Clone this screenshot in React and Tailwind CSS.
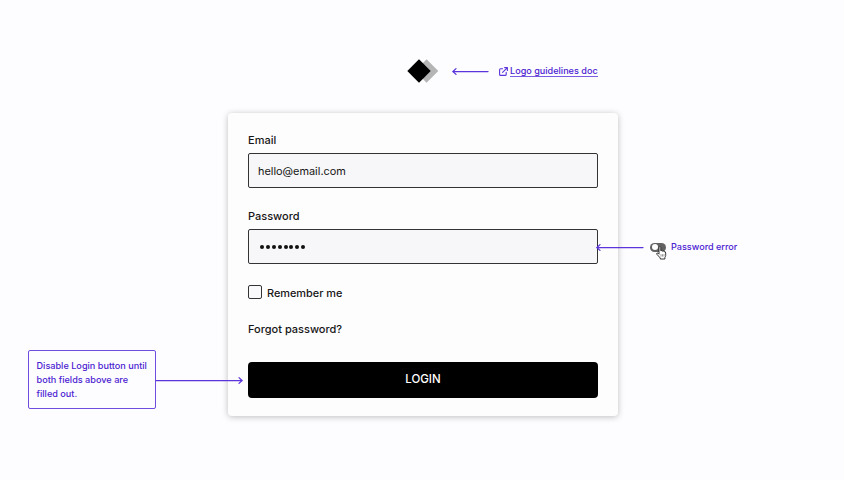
import React from 'react';

function Arrow({ width, direction, className = '' }) {
  const head =
    direction === 'left' ? 'M4 1.6 L1 4.5 L4 7.4' : `M${width - 4} 1.6 L${width - 1} 4.5 L${width - 4} 7.4`;
  return (
    <svg
      width={width}
      height="9"
      viewBox={`0 0 ${width} 9`}
      fill="none"
      stroke="#5b35db"
      strokeWidth="1.25"
      strokeLinecap="round"
      strokeLinejoin="round"
      className={`shrink-0 ${className}`}
    >
      <path d={`M1 4.5 H${width - 1}`} />
      <path d={head} />
    </svg>
  );
}

function Logo() {
  return (
    <svg width="32" height="24" viewBox="0 0 32 24" className="shrink-0">
      <path d="M19.6 0.3 L31.3 12 L19.6 23.7 L7.9 12 Z" fill="#b5b5b5" />
      <path d="M12 0.3 L23.7 12 L12 23.7 L0.3 12 Z" fill="#000" />
    </svg>
  );
}

function ExternalIcon() {
  return (
    <svg
      width="9"
      height="9"
      viewBox="0 0 9 9"
      fill="none"
      stroke="#5b35db"
      strokeWidth="1.1"
      strokeLinecap="round"
      strokeLinejoin="round"
      className="shrink-0"
    >
      <path d="M3.6 1.8 H1.6 Q0.6 1.8 0.6 2.8 V7.4 Q0.6 8.4 1.6 8.4 H6.2 Q7.2 8.4 7.2 7.4 V5.4" />
      <path d="M5.6 0.6 H8.4 V3.4 M8.2 0.8 L3.6 5.4" />
    </svg>
  );
}

function HandCursor() {
  return (
    <svg width="11" height="14" viewBox="0 0 11 14" className="absolute left-[6px] top-[3px]">
      <path
        d="M3 8.2 V1.6 Q3 0.6 3.9 0.6 Q4.8 0.6 4.8 1.6 V4.8 Q5.8 4.2 6.4 5.1 Q7.5 4.6 8 5.6 Q9.7 5.2 9.7 7 V9.4 Q9.7 10.5 8.9 11.5 V13 H4.3 V12 L0.9 8.3 Q0.3 7.4 1.1 7 Q1.9 6.7 3 8.2 Z"
        fill="#fff"
        stroke="#222"
        strokeWidth="0.9"
        strokeLinejoin="round"
      />
      <path d="M5 8.2 V10.6 M6.5 8.2 V10.6 M8 8.2 V10.6" stroke="#555" strokeWidth="0.6" />
    </svg>
  );
}

function Toggle() {
  return (
    <div className="relative h-[9px] w-4 shrink-0 rounded-full bg-[#626262] p-[1.5px]">
      <div className="size-[6px] rounded-full bg-white" />
      <HandCursor />
    </div>
  );
}

function Field({ label, children }) {
  return (
    <div className="flex flex-col">
      <span className="text-[11px] leading-[14px] font-medium">{label}</span>
      <div className="mt-[6px] flex h-[35px] items-center rounded-[2px] border border-[#333] bg-[#f7f6f8] pl-[9px]">
        {children}
      </div>
    </div>
  );
}

export default function App() {
  return (
    <div className="h-[480px] w-[844px] overflow-hidden bg-[#fdfcfe] font-['Inter',sans-serif] whitespace-nowrap text-[#161616]">
      <header className="flex h-[113px] items-start pt-[59px] pl-[407px]">
        <div className="flex h-6 items-center">
          <Logo />
          <Arrow width={37} direction="left" className="ml-[13px]" />
          <div className="ml-[10px] flex items-center gap-[2px] text-[9.1px] font-medium text-[#4b22d2]">
            <ExternalIcon />
            <a className="border-b border-[#7a5ce0] leading-[11px]">Logo guidelines doc</a>
          </div>
        </div>
      </header>

      <main className="grid h-[303px] grid-cols-[228px_390px_226px]">
        <aside className="z-10 flex items-end pb-[7px] pl-7">
          <div className="h-[59px] w-[128px] shrink-0 rounded-[2px] border border-[#6f4ddf] pt-[8px] pl-[7.5px] text-[9.15px] leading-[14px] font-medium text-[#4b22d2]">
            Disable Login button until
            <br />
            both fields above are
            <br />
            filled out.
          </div>
          <Arrow width={88} direction="right" className="-ml-px mb-[24px]" />
        </aside>

        <section className="flex flex-col rounded-[4px] bg-[#fefdfe] px-5 pt-[20px] shadow-[0_1px_6px_rgba(0,0,0,0.25)]">
          <Field label="Email">
            <span className="pt-px text-[10.9px]">hello@email.com</span>
          </Field>
          <div className="h-[21px]" />
          <Field label="Password">
            <span className="flex gap-[1.9px] pt-px pl-[2px]">
              {Array.from({ length: 8 }, (_, i) => (
                <i key={i} className="size-[4px] rounded-full bg-[#111]" />
              ))}
            </span>
          </Field>
          <div className="mt-[21px] flex h-[14px] items-center gap-[5px]">
            <div className="size-[14px] rounded-[2px] border border-[#333] bg-[#f9f8fa]" />
            <span className="pt-[2px] text-[10.9px] font-medium">Remember me</span>
          </div>
          <a className="mt-[23px] text-[11px] leading-[14px] font-medium">Forgot password?</a>
          <button className="mt-[26px] flex h-[36px] justify-center rounded-[4px] bg-black pt-[9px] text-[11.5px] leading-[16px] font-medium text-white">
            LOGIN
          </button>
        </section>

        <aside className="z-10 mt-[129.5px] flex h-[9px] items-center self-start">
          <Arrow width={48} direction="left" className="-ml-[22px]" />
          <div className="ml-[6px] flex items-center gap-[5px]">
            <Toggle />
            <span className="text-[9.1px] font-medium text-[#4b22d2]">Password error</span>
          </div>
        </aside>
      </main>
    </div>
  );
}
